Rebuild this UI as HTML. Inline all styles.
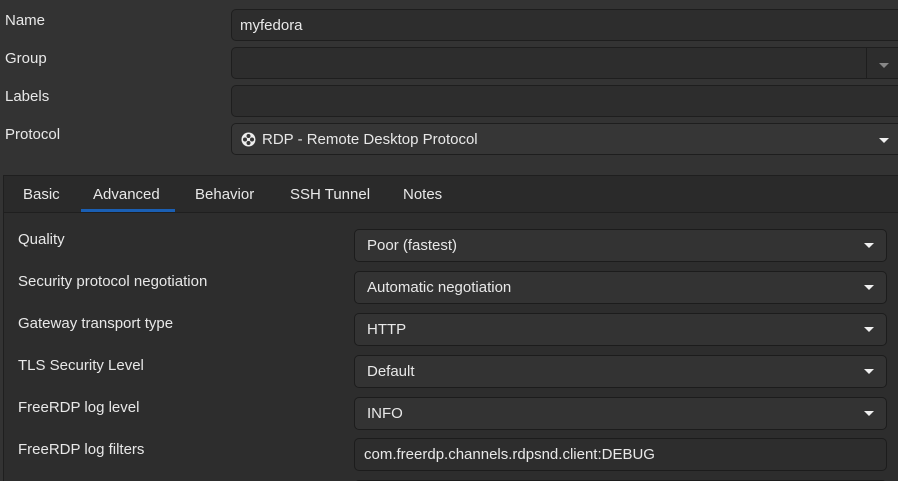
<!DOCTYPE html><html style="overflow:hidden;height:481px"><head><style>
body{margin:0;width:898px;height:481px;overflow:hidden;background:#333333;font-family:"Liberation Sans",sans-serif;font-size:15px;color:#e8e8e8;position:relative}
.a{position:absolute}
.lbl{position:absolute;left:5px}
.ent{position:absolute;left:231px;width:680px;height:32px;background:#2d2d2d;border:1px solid #1e1e1e;border-radius:5px;box-sizing:border-box}
.cb{position:absolute;left:354px;width:533px;height:33px;background:#333;border:1px solid #1c1c1c;border-radius:5px;box-sizing:border-box;padding:7px 12px}
.arr{position:absolute;right:12px;top:13px;width:0;height:0;border-left:5px solid transparent;border-right:5px solid transparent;border-top:5px solid #f0f0f0}
.cl{position:absolute;left:18px}
.tab{position:absolute;top:186px}
</style></head><body>
<div class="lbl" style="top:12px">Name</div>
<div class="lbl" style="top:50px">Group</div>
<div class="lbl" style="top:88px">Labels</div>
<div class="lbl" style="top:126px">Protocol</div>
<div class="ent" style="top:9px;padding:7px 8px">myfedora</div>
<div class="ent" style="top:47px"><div class="a" style="left:634px;top:0;width:1px;height:30px;background:#1e1e1e"></div><div class="a" style="left:647px;top:15px;border-left:5px solid transparent;border-right:5px solid transparent;border-top:5px solid #888"></div></div>
<div class="ent" style="top:85px"></div>
<div class="ent" style="top:123px;background:#363636;padding:7px 10px 0 30px">RDP - Remote Desktop Protocol
<svg class="a" style="left:9px;top:8px" width="15" height="15" viewBox="0 0 15 15"><circle cx="7.5" cy="7.5" r="7" fill="#eee"/><g fill="#363636"><circle cx="7.5" cy="4" r="2"/><circle cx="7.5" cy="11" r="2"/><circle cx="4" cy="7.5" r="2"/><circle cx="11" cy="7.5" r="2"/></g></svg>
<div class="a" style="left:647px;top:14px;border-left:5px solid transparent;border-right:5px solid transparent;border-top:5px solid #f0f0f0"></div></div>
<div class="a" style="left:3px;top:175px;width:900px;height:320px;background:#2d2d2d;border:1px solid #1f1f1f;box-sizing:border-box"></div>
<div class="a" style="left:4px;top:176px;width:900px;height:36px;background:#2a2a2a;border-bottom:1px solid #1f1f1f"></div>
<div class="tab" style="left:23px">Basic</div>
<div class="tab" style="left:93px">Advanced</div>
<div class="tab" style="left:195px">Behavior</div>
<div class="tab" style="left:290px">SSH Tunnel</div>
<div class="tab" style="left:403px">Notes</div>
<div class="a" style="left:81px;top:209px;width:94px;height:3px;background:#1a5fb4"></div>
<div class="cl" style="top:231px">Quality</div>
<div class="cl" style="top:273px">Security protocol negotiation</div>
<div class="cl" style="top:315px">Gateway transport type</div>
<div class="cl" style="top:357px">TLS Security Level</div>
<div class="cl" style="top:399px">FreeRDP log level</div>
<div class="cl" style="top:441px">FreeRDP log filters</div>
<div class="cb" style="top:229px">Poor (fastest)<div class="arr"></div></div>
<div class="cb" style="top:271px">Automatic negotiation<div class="arr"></div></div>
<div class="cb" style="top:313px">HTTP<div class="arr"></div></div>
<div class="cb" style="top:355px">Default<div class="arr"></div></div>
<div class="cb" style="top:397px">INFO<div class="arr"></div></div>
<div class="cb" style="top:438px;background:#2d2d2d;padding-left:9px">com.freerdp.channels.rdpsnd.client:DEBUG</div>
<div class="cb" style="top:480px;background:#2d2d2d;height:20px"></div>
</body></html>
